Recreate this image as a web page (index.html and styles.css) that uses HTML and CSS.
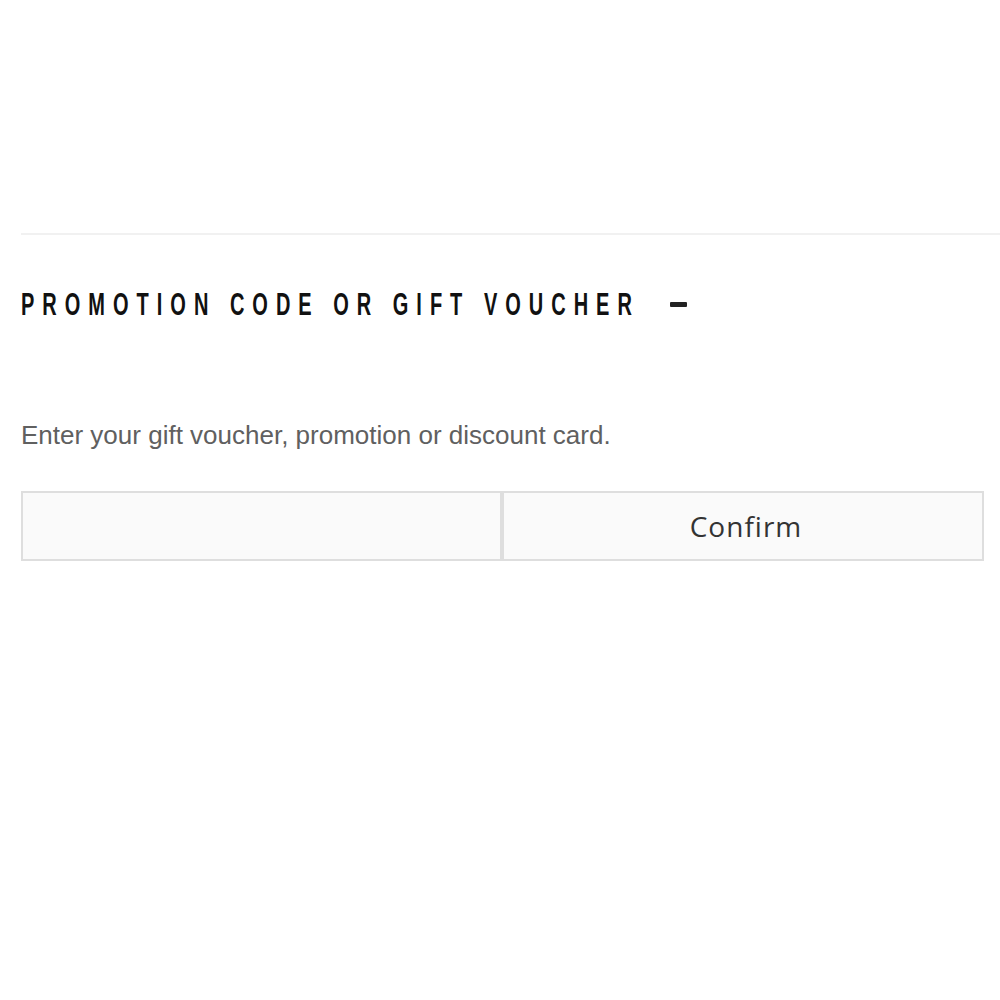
FILE: index.html
```html
<!DOCTYPE html>
<html lang="en">
<head>
<meta charset="utf-8">
<title>Promotion code</title>
<link rel="stylesheet" href="styles.css">
</head>
<body>
<section class="promo">
  <div class="divider"></div>
  <div class="promo-head">
    <h2 class="promo-title">PROMOTION CODE OR GIFT VOUCHER</h2>
    <span class="minus" aria-hidden="true"></span>
  </div>
  <p class="hint">Enter your gift voucher, promotion or discount card.</p>
  <form class="voucher" onsubmit="return false">
    <input class="code" type="text" aria-label="Code">
    <button class="confirm" type="submit">Confirm</button>
  </form>
</section>
</body>
</html>
```

FILE: styles.css
```css
html, body {
  margin: 0;
  padding: 0;
  background: #ffffff;
}

.promo {
  padding: 233px 0 0 21px;
}

.divider {
  height: 2px;
  background: #f1f1f1;
}

.promo-head {
  display: flex;
  align-items: center;
  height: 22px;
  margin-top: 58px;
}

.promo-title {
  margin: 0;
  font-family: "Liberation Sans", Arial, sans-serif;
  font-weight: bold;
  font-size: 20px;
  line-height: 22px;
  letter-spacing: 8px;
  color: #111111;
  transform: scaleY(1.54);
}

.minus {
  width: 17px;
  height: 5px;
  margin-left: 30px;
  background: #222222;
  border-radius: 1px;
}

.hint {
  margin: 105px 0 0;
  font-family: "Liberation Sans", Arial, sans-serif;
  font-size: 26px;
  line-height: 30px;
  color: #606060;
}

.voucher {
  display: flex;
  width: 963px;
  margin-top: 41px;
}

.code,
.confirm {
  box-sizing: border-box;
  height: 70px;
  margin: 0;
  border: 2px solid #dedede;
  background: #fafafa;
  outline: none;
}

.code {
  width: 481px;
  padding: 0 16px;
}

.confirm {
  flex: 1;
  font-family: "Open Sans", sans-serif;
  font-size: 28px;
  letter-spacing: 1px;
  color: #333333;
  padding: 0 0 0 6px;
  cursor: pointer;
}
```
